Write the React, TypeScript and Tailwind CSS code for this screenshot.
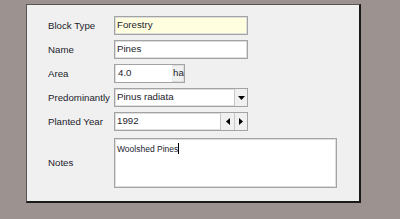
import React from 'react';

const font = { fontFamily: '"Liberation Sans", Arial, sans-serif' };

function Label({ children }: { children: React.ReactNode }) {
  return <div className="w-[66px] shrink-0 text-[9.7px] leading-none text-[#1c1c2c] whitespace-nowrap">{children}</div>;
}

const boxCls =
  'h-[19px] border border-[#a3a3a3] shadow-[inset_0_0_0_1px_#dedede] flex items-center text-[9.7px] text-[#1c1c2c]';

function TriDown() {
  return (
    <svg width="7" height="4" viewBox="0 0 7 4">
      <path d="M0 0h7L3.5 4z" fill="#000" />
    </svg>
  );
}

function TriLeft() {
  return (
    <svg width="4" height="7" viewBox="0 0 4 7">
      <path d="M4 0v7L0 3.5z" fill="#000" />
    </svg>
  );
}

function TriRight() {
  return (
    <svg width="4" height="7" viewBox="0 0 4 7">
      <path d="M0 0v7L4 3.5z" fill="#000" />
    </svg>
  );
}

export default function App() {
  return (
    <div className="w-[400px] h-[219px] bg-[#9c9290] pt-[4px] pl-[26px]" style={font}>
      <div className="w-[335px] h-[199px] bg-[#f0f0f0] border-l border-t border-[#555] border-r-2 border-b-2 border-r-[#1a1a1a] border-b-[#1a1a1a] pl-[21px] pt-[11px] flex flex-col gap-[5px]">
        <div className="flex items-center">
          <Label>Block Type</Label>
          <div className={`${boxCls} w-[134px] bg-[#ffffe0] px-[2px]`}>Forestry</div>
        </div>
        <div className="flex items-center">
          <Label>Name</Label>
          <div className={`${boxCls} w-[134px] bg-white px-[2px]`}>Pines</div>
        </div>
        <div className="flex items-center">
          <Label>Area</Label>
          <div className={`${boxCls} w-[71px] bg-[#f0f0f0]`}>
            <div className="h-[17px] w-[56px] bg-white flex items-center pl-[2px] ml-[1px]">4.0</div>
            <div className="pl-[1px]">ha</div>
          </div>
        </div>
        <div className="flex items-center">
          <Label>Predominantly</Label>
          <div className={`${boxCls} w-[134px] bg-white`}>
            <div className="flex-1 pl-[2px]">Pinus radiata</div>
            <div className="w-[13px] h-full border-l border-[#c8c8c8] bg-[#f0f0f0] flex items-center justify-center">
              <TriDown />
            </div>
          </div>
        </div>
        <div className="flex items-center">
          <Label>Planted Year</Label>
          <div className={`${boxCls} w-[134px] bg-white`}>
            <div className="flex-1 pl-[2px]">1992</div>
            <div className="w-[14px] h-full border-l border-[#c8c8c8] bg-[#f0f0f0] flex items-center justify-center">
              <TriLeft />
            </div>
            <div className="w-[13px] h-full border-l border-[#c8c8c8] bg-[#f0f0f0] flex items-center justify-center">
              <TriRight />
            </div>
          </div>
        </div>
        <div className="flex items-center mt-[2px]">
          <Label>Notes</Label>
          <div className="h-[50px] w-[223px] bg-white border border-[#a3a3a3] shadow-[inset_0_0_0_1px_#dedede] text-[8.5px] text-[#1c1c2c] px-[2px] pt-[4px] leading-[11px]">
            Woolshed Pines<span className="inline-block w-px h-[11px] bg-black align-[-2px]" />
          </div>
        </div>
      </div>
    </div>
  );
}
